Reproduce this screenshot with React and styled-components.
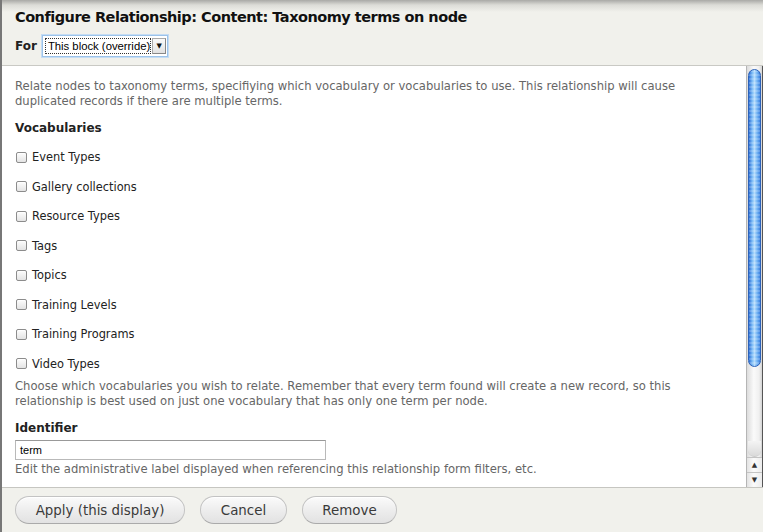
import React from "react";
import styled, { createGlobalStyle } from "styled-components";

const Global = createGlobalStyle`
  html, body { margin: 0; padding: 0; background: #fff; }
  body { font-family: "DejaVu Sans", "Liberation Sans", sans-serif; }
  * { box-sizing: border-box; }
`;

const Dialog = styled.div`
  width: 763px;
  height: 532px;
  display: flex;
  flex-direction: column;
  border-left: 2px solid #777;
  overflow: hidden;
`;

const Header = styled.div`
  height: 66px;
  flex: none;
  background: linear-gradient(#a9a9a6 0px, #dcdcd7 5px, #f1f1ec 12px, #f1f1ec 100%);
  border-bottom: 1px solid #c9c9c4;
  padding: 7px 0 0 13px;
  display: flex;
  flex-direction: column;
`;

const Title = styled.h1`
  margin: 0;
  font-size: 14.5px;
  letter-spacing: -0.5px;
  line-height: 20px;
  font-weight: bold;
  color: #111;
`;

const ForRow = styled.div`
  display: flex;
  align-items: center;
  gap: 5px;
  margin-top: 8px;
`;

const ForLabel = styled.span`
  font-size: 12px;
  font-weight: bold;
  color: #222;
`;

const SelectBox = styled.div`
  width: 126px;
  height: 22px;
  border: 1px solid #9cc3ea;
  box-shadow: 0 0 0 1px #c5dcf3;
  background: #fff;
  display: flex;
  align-items: center;
  padding: 2px;
`;

const SelectText = styled.span`
  flex: 1;
  height: 100%;
  border: 1px dotted #333;
  font-family: "Liberation Sans", Arial, sans-serif;
  font-size: 11.3px;
  line-height: 14px;
  color: #000;
  padding-left: 2px;
  white-space: nowrap;
`;

const SelectArrow = styled.span`
  width: 14px;
  flex: none;
  height: 100%;
  margin-left: 1px;
  border: 1px solid #aaa;
  border-right-color: #888;
  border-bottom-color: #888;
  background: linear-gradient(#fafafa, #e2e2e2);
  display: flex;
  align-items: center;
  justify-content: center;
  font-size: 7px;
  color: #111;
`;

const Body = styled.div`
  flex: 1;
  display: flex;
  min-height: 0;
  background: #fff;
`;

const Content = styled.div`
  flex: 1;
  padding: 13px 0 0 13px;
  overflow: hidden;
`;

const Description = styled.p`
  margin: ${(p) => p.$mt || 0}px 0 0;
  font-size: 11.6px;
  line-height: 15px;
  color: #666;
  white-space: nowrap;
`;

const FieldLabel = styled.div`
  margin-top: ${(p) => p.$mt}px;
  font-size: 12px;
  line-height: 15px;
  font-weight: bold;
  color: #222;
`;

const CheckList = styled.div`
  margin-top: 7px;
  display: flex;
  flex-direction: column;
`;

const CheckRow = styled.label`
  height: 29.5px;
  display: flex;
  align-items: center;
  gap: 5px;
  font-size: 11.4px;
  color: #222;
`;

const Box = styled.span`
  width: 11px;
  height: 11px;
  margin-left: 1px;
  border: 1px solid #8c8c8c;
  border-radius: 2px;
  background: linear-gradient(#fdfdfd, #e4e4e4);
  box-shadow: inset 0 1px 0 #fff;
`;

const TextInput = styled.div`
  margin-top: 4px;
  width: 311px;
  height: 20px;
  border: 1px solid #b9b9b9;
  border-top-color: #999;
  font-family: "Liberation Sans", Arial, sans-serif;
  font-size: 11px;
  line-height: 18px;
  color: #000;
  padding-left: 4px;
`;

const Scrollbar = styled.div`
  width: 17px;
  flex: none;
  display: flex;
  flex-direction: column;
  border-left: 1px solid #b5b5b5;
  background: linear-gradient(90deg, #dcdcdc, #fafafa 45%, #f0f0f0 80%, #d4d4d4);
  border-right: 1px solid #555;
`;

const Track = styled.div`
  flex: 1;
  padding: 3px 1px 0 1px;
  display: flex;
  flex-direction: column;
`;

const Thumb = styled.div`
  height: 298px;
  border-radius: 7px;
  border: 1px solid #2d62b8;
  background:
    repeating-linear-gradient(180deg, rgba(255,255,255,0.18) 0 2px, rgba(255,255,255,0) 2px 4px),
    linear-gradient(90deg, #2c6fd6, #7cbcf6 30%, #b4dcfc 50%, #6fb1f3 75%, #3c82e0);
`;

const TrackEnd = styled.div`
  margin-top: auto;
  height: 16px;
  border-radius: 0 0 7px 7px;
  background: linear-gradient(#f4f4f4, #dadada);
  border-bottom: 1px solid #c8c8c8;
`;

const ArrowButton = styled.div`
  height: 15px;
  flex: none;
  border-top: 1px solid #c4c4c4;
  display: flex;
  align-items: center;
  justify-content: center;
  font-size: 7px;
  color: #333;
  background: linear-gradient(90deg, #e3e3e3, #fbfbfb 45%, #ececec);
`;

const Footer = styled.div`
  height: 45px;
  flex: none;
  background: #f1f1ec;
  border-top: 1px solid #c6c6c1;
  padding: 8px 0 0 13px;
  display: flex;
  gap: 15px;
  align-items: flex-start;
`;

const Button = styled.button`
  height: 28px;
  width: ${(p) => p.$w}px;
  padding: 0;
  border: 1px solid #c3c3c3;
  border-bottom-color: #aaa;
  border-radius: 14px;
  background: linear-gradient(#fbfbfb, #ececec 55%, #e2e2e2);
  font-family: "DejaVu Sans", "Liberation Sans", sans-serif;
  font-size: 13.4px;
  color: #3a3a3a;
  box-shadow: inset 0 1px 0 #fff;
`;

const vocabularies = [
  "Event Types",
  "Gallery collections",
  "Resource Types",
  "Tags",
  "Topics",
  "Training Levels",
  "Training Programs",
  "Video Types",
];

export default function App() {
  return (
    <>
      <Global />
      <Dialog>
        <Header>
          <Title>Configure Relationship: Content: Taxonomy terms on node</Title>
          <ForRow>
            <ForLabel>For</ForLabel>
            <SelectBox>
              <SelectText>This block (override)</SelectText>
              <SelectArrow>▼</SelectArrow>
            </SelectBox>
          </ForRow>
        </Header>
        <Body>
          <Content>
            <Description>
              Relate nodes to taxonomy terms, specifiying which vocabulary or vocabularies to use. This relationship will cause
              <br />
              duplicated records if there are multiple terms.
            </Description>
            <FieldLabel $mt={11.5}>Vocabularies</FieldLabel>
            <CheckList>
              {vocabularies.map((v) => (
                <CheckRow key={v}>
                  <Box />
                  {v}
                </CheckRow>
              ))}
            </CheckList>
            <Description>
              Choose which vocabularies you wish to relate. Remember that every term found will create a new record, so this
              <br />
              relationship is best used on just one vocabulary that has only one term per node.
            </Description>
            <FieldLabel $mt={12}>Identifier</FieldLabel>
            <TextInput>term</TextInput>
            <Description $mt={2.5}>
              Edit the administrative label displayed when referencing this relationship form filters, etc.
            </Description>
          </Content>
          <Scrollbar>
            <Track>
              <Thumb />
              <TrackEnd />
            </Track>
            <ArrowButton>▲</ArrowButton>
            <ArrowButton>▼</ArrowButton>
          </Scrollbar>
        </Body>
        <Footer>
          <Button $w={170}>Apply (this display)</Button>
          <Button $w={87}>Cancel</Button>
          <Button $w={95}>Remove</Button>
        </Footer>
      </Dialog>
    </>
  );
}
